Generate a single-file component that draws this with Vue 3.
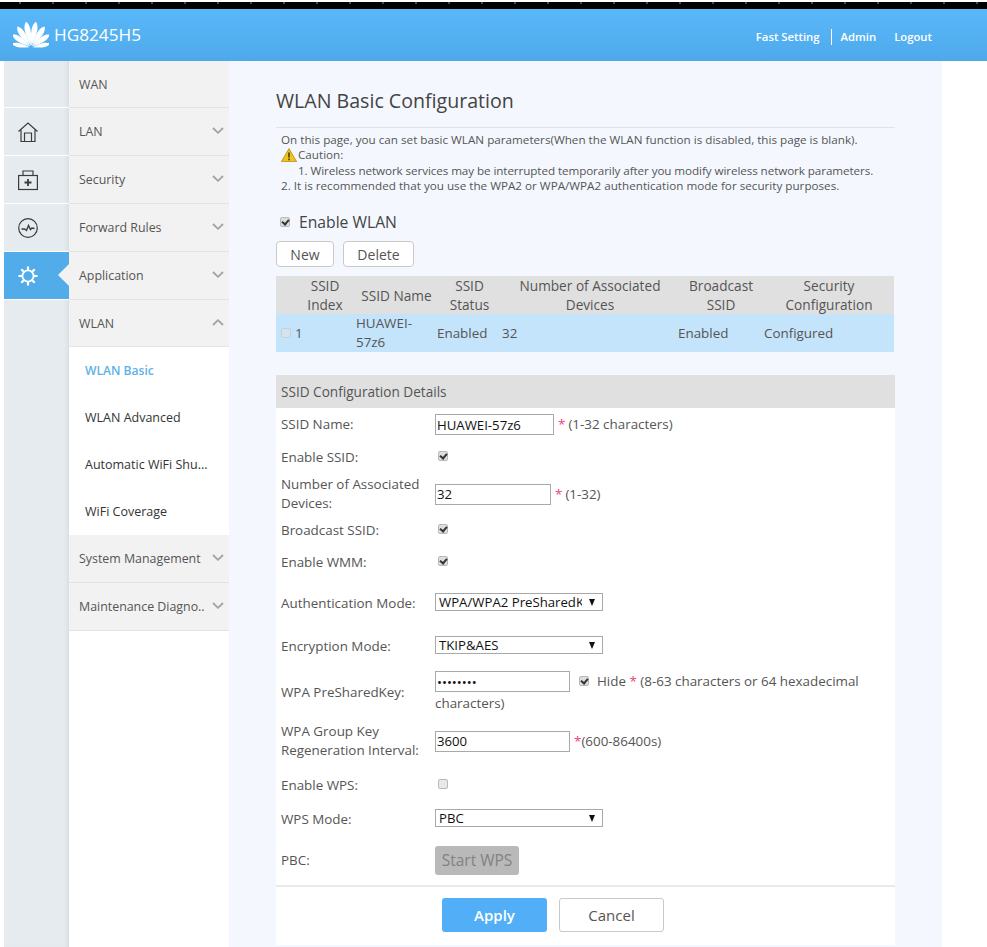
<script setup>
const rails = [
  { id: 'blank', first: true },
  { id: 'home' },
  { id: 'kit' },
  { id: 'pulse' },
  { id: 'gear', active: true },
]
const menus = [
  { label: 'WAN', arrow: '', short: true },
  { label: 'LAN', arrow: 'down' },
  { label: 'Security', arrow: 'down' },
  { label: 'Forward Rules', arrow: 'down' },
  { label: 'Application', arrow: 'down' },
  { label: 'WLAN', arrow: 'up', short: true },
]
const subs = [
  { label: 'WLAN Basic', active: true },
  { label: 'WLAN Advanced' },
  { label: 'Automatic WiFi Shu...' },
  { label: 'WiFi Coverage' },
]
const menusAfter = [
  { label: 'System Management', arrow: 'down' },
  { label: 'Maintenance Diagno..', arrow: 'down' },
]
const petals = [
  { a: -11, s: 1.2, w: 0.85 }, { a: 11, s: 1.2, w: 0.85 },
  { a: -33, s: 1.14, w: 0.85 }, { a: 33, s: 1.14, w: 0.85 },
  { a: -55, s: 1.02, w: 0.8 }, { a: 55, s: 1.02, w: 0.8 },
  { a: -79, s: 0.88, w: 0.62 }, { a: 79, s: 0.88, w: 0.62 },
]
</script>

<template>
  <div class="page">
    <div class="strip"></div>
    <header class="top">
      <div class="brand">
        <svg class="logo" width="36" height="29" viewBox="-18 -26.5 36 29">
          <path v-for="p in petals" :key="p.a" :transform="`rotate(${p.a}) translate(0 -1.6) scale(${p.w} ${p.s})`" fill="#fff"
            d="M0 0 C-1.6 -5 -3.6 -9 -3.4 -14 C-3.3 -17 -1.6 -19.5 0 -20.5 C1.6 -19.5 3.3 -17 3.4 -14 C3.6 -9 1.6 -5 0 0 Z" />
        </svg>
        <span class="model">HG8245H5</span>
      </div>
      <nav class="links">
        <a class="link first">Fast Setting</a>
        <a class="link mid">Admin</a>
        <a class="link">Logout</a>
      </nav>
    </header>
    <div class="body">
      <aside class="rail">
        <div v-for="r in rails" :key="r.id" class="rail-item" :class="{ on: r.active, short: r.first }">
          <svg v-if="r.id === 'home'" width="22" height="22" viewBox="0 0 22 22" fill="none" stroke="#3c3c3c" stroke-width="1.2">
            <path d="M1.5 10.5 L11 2 L20.5 10.5" />
            <path d="M4 9 V20.5 H18 V9" />
            <path d="M7.5 20.5 V12 H14.5 V20.5" />
          </svg>
          <svg v-if="r.id === 'kit'" width="22" height="22" viewBox="0 0 22 22" fill="none" stroke="#3c3c3c" stroke-width="1.2">
            <path d="M6 6.5 V2 H16 V6.5" />
            <rect x="1.6" y="6.5" width="18.8" height="14" />
            <path d="M11 10 V17 M7.5 13.5 H14.5" stroke-width="1.8" />
          </svg>
          <svg v-if="r.id === 'pulse'" width="22" height="22" viewBox="0 0 22 22" fill="none" stroke="#3c3c3c" stroke-width="1.2">
            <circle cx="11" cy="11" r="9.3" />
            <path d="M4.5 12 L7.5 12 L9.5 13.5 L11.5 8.5 L13.5 12.5 L15 11 L17.5 11.5" stroke-width="1.4" />
          </svg>
          <svg v-if="r.id === 'gear'" width="22" height="22" viewBox="0 0 22 22" fill="none" stroke="#fff">
            <circle cx="11" cy="11" r="5.6" stroke-width="1.8" />
            <path stroke-width="2.2" d="M11 1.5 V5 M11 17 V20.5 M1.5 11 H5 M17 11 H20.5 M4.3 4.3 L6.8 6.8 M15.2 15.2 L17.7 17.7 M17.7 4.3 L15.2 6.8 M6.8 15.2 L4.3 17.7" />
          </svg>
          <span v-if="r.active" class="notch"></span>
        </div>
        <div class="rail-rest"></div>
      </aside>
      <nav class="menu">
        <div v-for="m in menus" :key="m.label" class="menu-item" :class="{ short: m.short }">
          <span>{{ m.label }}</span>
          <svg v-if="m.arrow" class="chev" width="12" height="7" viewBox="0 0 12 7" fill="none" stroke="#a3a3a3" stroke-width="1.8">
            <path v-if="m.arrow === 'down'" d="M1 1 L6 5.8 L11 1" />
            <path v-else d="M1 6 L6 1.2 L11 6" />
          </svg>
        </div>
        <div class="subs">
          <div v-for="s in subs" :key="s.label" class="sub" :class="{ on: s.active }">{{ s.label }}</div>
        </div>
        <div v-for="m in menusAfter" :key="m.label" class="menu-item">
          <span>{{ m.label }}</span>
          <svg class="chev" width="12" height="7" viewBox="0 0 12 7" fill="none" stroke="#a3a3a3" stroke-width="1.8">
            <path d="M1 1 L6 5.8 L11 1" />
          </svg>
        </div>
      </nav>
      <main class="content">
        <h1 class="title">WLAN Basic Configuration</h1>
        <div class="notes">
          <div>On this page, you can set basic WLAN parameters(When the WLAN function is disabled, this page is blank).</div>
          <div class="caution">
            <svg width="16" height="14" viewBox="0 0 16 14">
              <path d="M8 .6 L15.6 13.6 H.4 Z" fill="#f0c420" stroke="#b08a10" stroke-width=".8" />
              <path d="M8 4.6 V9.4 M8 10.6 V12.2" stroke="#3a3000" stroke-width="1.5" />
            </svg>
            <span>Caution:</span>
          </div>
          <div class="indent">1. Wireless network services may be interrupted temporarily after you modify wireless network parameters.</div>
          <div>2. It is recommended that you use the WPA2 or WPA/WPA2 authentication mode for security purposes.</div>
        </div>
        <label class="enable">
          <span class="cb checked"></span>
          <span>Enable WLAN</span>
        </label>
        <div class="actions">
          <button class="small new">New</button>
          <button class="small del">Delete</button>
        </div>
        <table class="list">
          <thead>
            <tr>
              <th class="c1">SSID<br />Index</th>
              <th class="c2">SSID Name</th>
              <th class="c3">SSID<br />Status</th>
              <th class="c4">Number of Associated<br />Devices</th>
              <th class="c5">Broadcast<br />SSID</th>
              <th class="c6">Security<br />Configuration</th>
            </tr>
          </thead>
          <tbody>
            <tr>
              <td class="c1"><span class="cb blank"></span>1</td>
              <td class="c2">HUAWEI-<br />57z6</td>
              <td class="c3">Enabled</td>
              <td class="c4">32</td>
              <td class="c5">Enabled</td>
              <td class="c6">Configured</td>
            </tr>
          </tbody>
        </table>
        <div class="details-head">SSID Configuration Details</div>
        <section class="form">
          <div class="row r33">
            <div class="lab">SSID Name:</div>
            <div class="val"><input class="text w119" value="HUAWEI-57z6" /><i class="req">*</i> (1-32 characters)</div>
          </div>
          <div class="row r33">
            <div class="lab">Enable SSID:</div>
            <div class="val"><span class="cb checked"></span></div>
          </div>
          <div class="row r40">
            <div class="lab">Number of Associated<br />Devices:</div>
            <div class="val"><input class="text w116" value="32" /><i class="req">*</i> (1-32)</div>
          </div>
          <div class="row r32">
            <div class="lab">Broadcast SSID:</div>
            <div class="val"><span class="cb checked"></span></div>
          </div>
          <div class="row r32">
            <div class="lab">Enable WMM:</div>
            <div class="val"><span class="cb checked"></span></div>
          </div>
          <div class="row r50">
            <div class="lab">Authentication Mode:</div>
            <div class="val"><span class="sel"><select><option>WPA/WPA2 PreSharedKey</option></select></span></div>
          </div>
          <div class="row r36">
            <div class="lab">Encryption Mode:</div>
            <div class="val"><span class="sel"><select><option>TKIP&amp;AES</option></select></span></div>
          </div>
          <div class="row r56">
            <div class="lab">WPA PreSharedKey:</div>
            <div class="val wrap">
              <input class="text w135" type="password" value="12345678" /><span class="cb checked hide"></span>Hide <i class="req flat">*</i> (8-63 characters or 64 hexadecimal<br />characters)
            </div>
          </div>
          <div class="row r42">
            <div class="lab">WPA Group Key<br />Regeneration Interval:</div>
            <div class="val"><input class="text w135" value="3600" /><i class="req tight">*</i>(600-86400s)</div>
          </div>
          <div class="row r34 after-gap">
            <div class="lab">Enable WPS:</div>
            <div class="val"><span class="cb"></span></div>
          </div>
          <div class="row r34">
            <div class="lab">WPS Mode:</div>
            <div class="val"><span class="sel"><select><option>PBC</option></select></span></div>
          </div>
          <div class="row r49">
            <div class="lab">PBC:</div>
            <div class="val"><button class="start">Start WPS</button></div>
          </div>
          <div class="foot">
            <button class="apply">Apply</button>
            <button class="cancel">Cancel</button>
          </div>
        </section>
      </main>
      <div class="margin"></div>
    </div>
  </div>
</template>

<style>
html, body { margin: 0; padding: 0; background: #fff; overflow: hidden; }
</style>

<style scoped>
.page {
  width: 987px;
  height: 947px;
  overflow: hidden;
  font-family: "Open Sans", "Noto Sans", sans-serif;
  font-size: 13px;
  color: #555;
}
.strip {
  height: 7px;
  margin-top: 2px;
  background-color: #000;
  background-image: repeating-linear-gradient(90deg, #4a4a4a 0 2px, transparent 2px 33px);
  background-size: 100% 2px;
  background-repeat: no-repeat;
  background-position: 19px 0;
}
.top {
  height: 52px;
  display: flex;
  align-items: center;
  justify-content: space-between;
  background: linear-gradient(#59b8fa, #4ea9ea);
  color: #fff;
}
.brand { display: flex; align-items: center; padding-left: 13px; }
.logo { display: block; }
.model { font-size: 17.2px; margin-left: 5px; position: relative; top: -1px; }
.links { display: flex; align-items: center; padding: 4px 55px 0 0; font-size: 11.3px; font-weight: 600; }
.link { display: block; line-height: 16px; }
.first { padding-right: 11px; border-right: 1px solid #fff; }
.mid { padding-left: 9px; padding-right: 18px; }
.body { display: flex; height: 886px; }
.rail {
  width: 65px;
  margin-left: 4px;
  display: flex;
  flex-direction: column;
  background: #e5ebef;
  box-shadow: inset -4px 0 4px -3px #d2d8dc;
}
.rail-item {
  height: 47px;
  border-bottom: 1px solid #fff;
  display: flex;
  align-items: center;
  justify-content: center;
  position: relative;
  padding-right: 18px;
}
.rail-item.short { height: 46px; }
.rail-item.on { background: #52ace9; }
.notch {
  position: absolute;
  right: 0;
  top: 12px;
  border-style: solid;
  border-width: 11px 11px 11px 0;
  border-color: transparent #f2f2f2 transparent transparent;
  width: 0;
  height: 0;
}
.rail-rest { flex: 1; }
.menu { width: 160px; background: #fff; }
.menu-item {
  height: 47px;
  display: flex;
  align-items: center;
  justify-content: space-between;
  padding: 0 5px 0 10px;
  background: #f2f2f2;
  border-bottom: 1px solid #e3e3e3;
  color: #555;
  font-size: 12.4px;
  white-space: nowrap;
}
.menu-item.short { height: 46px; }
.chev { flex: none; margin-bottom: 2px; }
.subs { background: #fff; }
.sub { height: 47px; display: flex; align-items: center; padding-left: 16px; color: #333; font-size: 12.5px; }
.sub.on { color: #5db2e8; font-weight: 600; font-size: 12.1px; }
.content {
  width: 713px;
  background: #f4f8fe;
  padding: 0 47px;
  box-sizing: border-box;
}
.title {
  margin: 0;
  height: 67px;
  box-sizing: border-box;
  padding-top: 27px;
  font-size: 19.6px;
  font-weight: 400;
  line-height: 26px;
  color: #444;
  border-bottom: 1px solid #dfe3e7;
  width: 619px;
}
.notes { padding: 4px 0 0 5px; font-size: 11.68px; line-height: 15.3px; color: #555; height: 69px; width: 619px; box-sizing: border-box; white-space: nowrap; }
.caution { display: flex; align-items: center; gap: 1px; }
.indent { padding-left: 17px; letter-spacing: -0.09px; }
.enable { display: flex; align-items: center; gap: 9px; height: 22px; padding-left: 4px; font-size: 15.7px; color: #444; margin-top: 14px; }
.cb {
  display: inline-block;
  width: 10px;
  height: 10px;
  box-sizing: border-box;
  border: 1px solid #b9b9b9;
  border-radius: 2px;
  background: #e8e8e8;
  position: relative;
  flex: none;
}
.cb.checked { background: #dedede; }
.cb.checked::after {
  content: "";
  position: absolute;
  left: 1.5px;
  top: 0;
  width: 3px;
  height: 5px;
  border: solid #333;
  border-width: 0 2px 2px 0;
  transform: rotate(40deg);
}
.cb.blank { background: #d6e2ec; border-color: #c2d2dd; margin-right: 4px; }
.actions { display: flex; gap: 9px; margin-top: 8px; height: 26px; }
.small {
  font: inherit;
  font-size: 14px;
  color: #555;
  background: #fff;
  border: 1px solid #c9c9c9;
  border-radius: 4px;
  padding: 0;
  height: 26px;
}
.new { width: 58px; }
.del { width: 71px; }
.list {
  width: 618px;
  table-layout: fixed;
  border-collapse: collapse;
  margin-top: 9px;
  font-size: 13.65px;
  line-height: 19px;
}
.list th { background: #e0e0e0; font-weight: 400; color: #555; height: 38px; padding: 0; text-align: center; vertical-align: middle; }
.list td { background: #c4e4fc; color: #555; height: 38px; padding: 0; line-height: 19px; text-align: left; font-size: 13.4px; }
.c1 { width: 80px; }
.c2 { width: 81px; }
.c3 { width: 65px; }
.c4 { width: 176px; }
.c5 { width: 86px; }
.c6 { width: 130px; }
.list th.c1 { padding-left: 24px; box-sizing: border-box; text-align: center; padding-right: 6px; }
.list td.c1 { padding-left: 5px; }
.details-head {
  margin-top: 23px;
  width: 619px;
  height: 33px;
  line-height: 33px;
  background: #e0e0e0;
  padding-left: 5px;
  box-sizing: border-box;
  font-size: 13.6px;
}
.form { width: 619px; background: #fff; height: 537px; font-size: 13.4px; }
.row { display: flex; align-items: center; padding-left: 5px; line-height: 19px; }
.r32 { height: 32px; }
.r33 { height: 33px; }
.r34 { height: 34px; }
.r36 { height: 36px; }
.r40 { height: 40px; }
.r42 { height: 42px; }
.r49 { height: 49px; }
.r50 { height: 50px; }
.r56 { height: 56px; }
.after-gap { margin-top: 6px; }
.lab { width: 154px; flex: none; }
.val { flex: 1; display: flex; align-items: center; white-space: nowrap; }
.val > .cb { margin-left: 3px; margin-top: -3px; }
.val.wrap { display: block; line-height: 22px; }
.text {
  font-family: "Open Sans", "Noto Sans", sans-serif;
  font-size: 13.2px;
  color: #111;
  height: 21px;
  padding: 0 1px;
  border: 1px solid #a9a9a9;
  box-sizing: border-box;
  background: #fff;
  outline: none;
}
.w119 { width: 119px; }
.w116 { width: 116px; }
.w135 { width: 135px; }
.req { font-style: normal; color: #e8457a; margin: 0 3px 0 4px; }
.req.tight { margin: 0 0 0 4px; }
.req.flat { margin: 0; }
.val.wrap .text { vertical-align: middle; }
.val.wrap > .hide { margin: 0 8px 0 9px; vertical-align: 0; }
.sel { position: relative; display: block; width: 168px; height: 18px; margin-top: -2px; }
.sel::after {
  content: "";
  position: absolute;
  right: 8px;
  top: 6px;
  border-style: solid;
  border-width: 7px 3.5px 0 3.5px;
  border-color: #111 transparent transparent transparent;
}
.sel select {
  appearance: none;
  display: block;
  width: 168px;
  height: 18px;
  border: 1px solid #a9a9a9;
  border-radius: 0;
  background: #fff;
  color: #111;
  font-family: "Open Sans", "Noto Sans", sans-serif;
  font-size: 13.2px;
  line-height: 16px;
  padding: 0 20px 0 3px;
  outline: none;
}
.start {
  width: 84px;
  height: 29px;
  background: #b9b9b9;
  color: #828282;
  border: 0;
  border-radius: 3px;
  font: inherit;
  font-size: 15.5px;
  padding: 0;
}
.foot {
  border-top: 2px solid #eaeaea;
  display: flex;
  justify-content: center;
  gap: 12px;
  padding-top: 11px;
  padding-right: 65px;
  box-sizing: border-box;
  height: 60px;
}
.apply, .cancel { width: 105px; height: 34px; border-radius: 3px; font: inherit; font-size: 15px; padding: 0; }
.apply { background: #53aef8; color: #fff; border: 0; font-weight: 600; }
.cancel { background: #fff; color: #555; border: 1px solid #c9c9c9; }
.margin { flex: 1; background: #fff; }
</style>
